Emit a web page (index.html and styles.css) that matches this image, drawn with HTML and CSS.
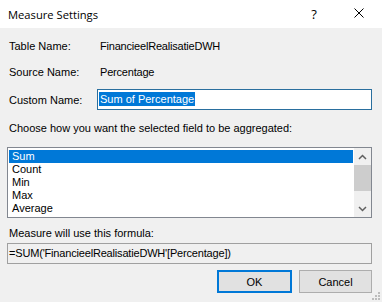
FILE: index.html
```html
<!DOCTYPE html>
<html>
<head>
<meta charset="utf-8">
<link rel="stylesheet" href="styles.css">
</head>
<body>
<div class="dialog">
  <div class="titlebar">
    <span class="title">Measure Settings</span>
    <span class="caption-btns">
      <span class="cap-btn help">?</span>
      <span class="cap-btn close"><svg width="10" height="10" viewBox="0 0 10 10"><path d="M0.5 0.5 L9.5 9.5 M9.5 0.5 L0.5 9.5" stroke="#000" stroke-width="1" fill="none"/></svg></span>
    </span>
  </div>
  <div class="content">
    <div class="info-row first">
      <span class="label">Table Name:</span>
      <span class="value">FinancieelRealisatieDWH</span>
    </div>
    <div class="info-row">
      <span class="label">Source Name:</span>
      <span class="value">Percentage</span>
    </div>
    <div class="custom-row">
      <span class="label narrow">Custom Name:</span>
      <div class="textbox"><span class="sel">Sum of Percentage</span></div>
    </div>
    <div class="plain-label choose">Choose how you want the selected field to be aggregated:</div>
    <div class="listbox">
      <ul class="items">
        <li class="selected">Sum</li>
        <li>Count</li>
        <li>Min</li>
        <li>Max</li>
        <li>Average</li>
      </ul>
      <div class="scrollbar">
        <div class="arrow up"><svg width="9" height="6" viewBox="0 0 9 6"><path d="M1 5 L4.5 1.5 L8 5" stroke="#606060" stroke-width="1.5" fill="none"/></svg></div>
        <div class="track"><div class="thumb"></div></div>
        <div class="arrow down"><svg width="9" height="6" viewBox="0 0 9 6"><path d="M1 1 L4.5 4.5 L8 1" stroke="#606060" stroke-width="1.5" fill="none"/></svg></div>
      </div>
    </div>
    <div class="plain-label formula-label">Measure will use this formula:</div>
    <div class="formula">=SUM('FinancieelRealisatieDWH'[Percentage])</div>
    <div class="buttons">
      <button class="btn default">OK</button>
      <button class="btn">Cancel</button>
    </div>
  </div>
  <svg class="grip" width="8" height="8" viewBox="0 0 8 8">
    <rect x="6" y="0" width="2" height="2" fill="#bdbdbd"/>
    <rect x="3" y="3" width="2" height="2" fill="#bdbdbd"/>
    <rect x="6" y="3" width="2" height="2" fill="#bdbdbd"/>
    <rect x="0" y="6" width="2" height="2" fill="#bdbdbd"/>
    <rect x="3" y="6" width="2" height="2" fill="#bdbdbd"/>
    <rect x="6" y="6" width="2" height="2" fill="#bdbdbd"/>
  </svg>
</div>
</body>
</html>
```
FILE: styles.css
```css
* { box-sizing: border-box; }
html, body { margin: 0; padding: 0; }
body {
  width: 382px;
  height: 302px;
  background: #f0f0f0;
  font-family: "Liberation Sans", Arial, sans-serif;
  font-size: 11px;
  color: #000;
  overflow: hidden;
}
.dialog {
  position: relative;
  width: 382px;
  height: 302px;
}
.titlebar {
  height: 28px;
  background: #fff;
  display: flex;
  align-items: center;
  justify-content: space-between;
}
.title {
  font-family: "Open Sans", "Noto Sans", sans-serif;
  font-size: 11.2px;
  padding-left: 8px;
  padding-top: 1px;
}
.caption-btns {
  display: flex;
  height: 28px;
}
.cap-btn {
  display: flex;
  align-items: center;
  justify-content: center;
  height: 28px;
}
.help {
  width: 44px;
  font-family: "Open Sans", "Noto Sans", sans-serif;
  font-size: 13px;
  padding-top: 0px;
}
.close {
  width: 46px;
  padding-bottom: 3px;
}
.content {
  padding: 0 10px 0 7px;
}
.info-row {
  display: flex;
  align-items: center;
  height: 26px;
}
.info-row.first {
  margin-top: 5px;
}
.label {
  width: 93px;
  padding-left: 2px;
  flex: none;
}
.label.narrow {
  width: 90px;
}
.value {
  letter-spacing: -0.2px;
}
.custom-row {
  display: flex;
  align-items: center;
  margin-top: 4px;
  height: 21px;
}
.textbox {
  flex: 1;
  height: 21px;
  background: #fff;
  border: 1px solid #2a6f9e;
  padding: 2px 0 0 1px;
}
.sel {
  display: inline-block;
  background: #0078d7;
  color: #fff;
  line-height: 14px;
  padding: 0 1px 0 1px;
}
.plain-label {
  padding-left: 2px;
  line-height: 13px;
}
.choose {
  margin-top: 12px;
}
.listbox {
  margin-top: 12px;
  height: 71px;
  border: 1px solid #828790;
  background: #fff;
  display: flex;
  padding: 0;
}
.items {
  list-style: none;
  margin: 0;
  padding: 2px 0 0 1px;
  flex: 1;
}
.items li {
  height: 13px;
  line-height: 13px;
  padding-left: 3px;
}
.items li.selected {
  background: #0078d7;
  color: #fff;
}
.scrollbar {
  width: 17px;
  margin-left: 1px;
  background: #f0f0f0;
  display: flex;
  flex-direction: column;
}
.arrow {
  height: 17px;
  display: flex;
  align-items: center;
  justify-content: center;
}
.track {
  flex: 1;
}
.thumb {
  height: 26px;
  background: #cdcdcd;
}
.formula-label {
  margin-top: 9px;
}
.formula {
  margin-top: 3px;
  height: 21px;
  border: 1px solid #a0a0a0;
  background: #f0f0f0;
  padding: 3px 0 0 1px;
  line-height: 13px;
  letter-spacing: -0.18px;
}
.buttons {
  display: flex;
  justify-content: flex-end;
  gap: 7px;
  margin-top: 6px;
}
.btn {
  font-family: "Liberation Sans", Arial, sans-serif;
  font-size: 11px;
  color: #000;
  height: 23px;
  background: #e1e1e1;
  border: 1px solid #adadad;
  padding: 0;
  margin: 0;
  width: 73px;
}
.btn.default {
  width: 75px;
  border: 2px solid #0078d7;
}
.grip {
  position: absolute;
  right: 2px;
  bottom: 2px;
}
```
